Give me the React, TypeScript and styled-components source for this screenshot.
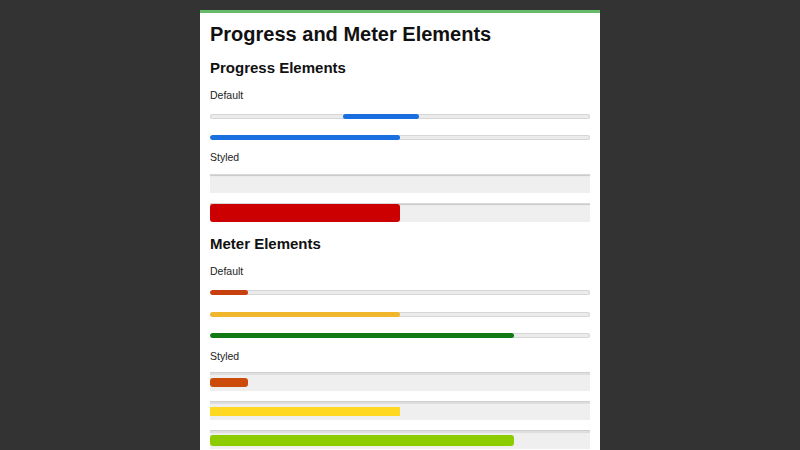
import React from "react";
import styled, { createGlobalStyle } from "styled-components";

const Global = createGlobalStyle`
  html, body { margin: 0; padding: 0; background: #333333; }
  body { font-family: "Liberation Sans", Arial, sans-serif; color: #111; }
`;

const Card = styled.main`
  width: 400px;
  box-sizing: border-box;
  margin: 10px auto 0;
  background: #ffffff;
  border-top: 3px solid #66bb6a;
  padding: 8px 10px 20px;
  display: flex;
  flex-direction: column;
`;

const Title = styled.h1`
  margin: 0;
  font-size: 20px;
  line-height: 26px;
  font-weight: 700;
  color: #111;
`;

const Section = styled.h2<{ $mt: number }>`
  margin: ${(p) => p.$mt}px 0 0;
  font-size: 15px;
  line-height: 22px;
  font-weight: 700;
  color: #111;
`;

const Label = styled.p<{ $mt: number }>`
  margin: ${(p) => p.$mt}px 0 0;
  font-size: 10.5px;
  line-height: 16px;
  color: #222;
`;

const Track = styled.div<{ $mt: number }>`
  position: relative;
  margin-top: ${(p) => p.$mt}px;
  height: 5px;
  background: #ebebeb;
  box-shadow: inset 0 0 0 1px #d6d6d6;
  border-radius: 3px;
  overflow: hidden;
`;

const Fill = styled.div<{ $color: string }>`
  height: 100%;
  background: ${(p) => p.$color};
  border-radius: 3px;
`;

const Indeterminate = styled.div`
  position: absolute;
  top: 0;
  bottom: 0;
  left: 35%;
  width: 20%;
  background: #1a6fe0;
  border-radius: 3px;
`;

const StyledTrack = styled.div<{ $mt: number; $h: number }>`
  margin-top: ${(p) => p.$mt}px;
  height: ${(p) => p.$h}px;
  background: #efefef;
  box-shadow: inset 0 2px 1px -1px #c8c8c8;
  border-top: 1px solid #d8d8d8;
  box-sizing: border-box;
  display: flex;
  align-items: stretch;
`;

const RedFill = styled.div`
  background: #cc0000;
  border-radius: 3px;
`;

const MeterTrack = styled.div<{ $mt: number }>`
  margin-top: ${(p) => p.$mt}px;
  height: 19px;
  box-sizing: border-box;
  background: #efefef;
  border-top: 1px solid #cfcfcf;
  box-shadow: inset 0 3px 0 -1px #dedede;
  display: flex;
  align-items: center;
  padding-top: 1px;
`;

const MeterFill = styled.div<{ $color: string; $h: number; $r: number }>`
  height: ${(p) => p.$h}px;
  background: ${(p) => p.$color};
  border-radius: ${(p) => p.$r}px;
`;

export default function App() {
  return (
    <>
      <Global />
      <Card>
        <Title>Progress and Meter Elements</Title>
        <Section $mt={10}>Progress Elements</Section>
        <Label $mt={8}>Default</Label>
        <Track $mt={11} role="progressbar">
          <Indeterminate />
        </Track>
        <Track $mt={16} role="progressbar">
          <Fill $color="#1a6fe0" style={{ width: "50%" }} />
        </Track>
        <Label $mt={9}>Styled</Label>
        <StyledTrack $mt={9} $h={19} role="progressbar" />
        <StyledTrack $mt={10} $h={19} role="progressbar">
          <RedFill style={{ width: "50%" }} />
        </StyledTrack>
        <Section $mt={11}>Meter Elements</Section>
        <Label $mt={8}>Default</Label>
        <Track $mt={11} role="meter">
          <Fill $color="#c8400f" style={{ width: "10%" }} />
        </Track>
        <Track $mt={17} role="meter">
          <Fill $color="#f1b72c" style={{ width: "50%" }} />
        </Track>
        <Track $mt={16} role="meter">
          <Fill $color="#117a14" style={{ width: "80%" }} />
        </Track>
        <Label $mt={10}>Styled</Label>
        <MeterTrack $mt={8} role="meter">
          <MeterFill $color="#cc4a0a" $h={9} $r={3} style={{ width: "10%" }} />
        </MeterTrack>
        <MeterTrack $mt={10} role="meter">
          <MeterFill $color="#ffd822" $h={9} $r={0} style={{ width: "50%" }} />
        </MeterTrack>
        <MeterTrack $mt={10} role="meter">
          <MeterFill $color="#8ccc00" $h={11} $r={3} style={{ width: "80%" }} />
        </MeterTrack>
      </Card>
    </>
  );
}
